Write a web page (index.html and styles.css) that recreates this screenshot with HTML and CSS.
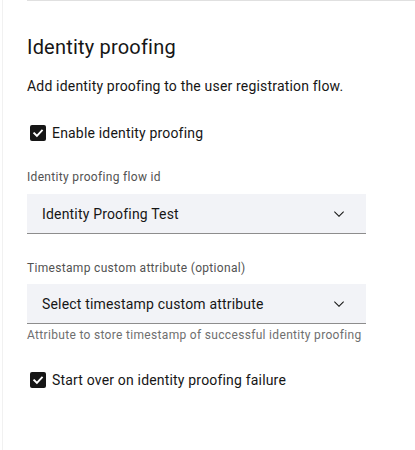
FILE: index.html
```html
<!DOCTYPE html>
<html lang="en">
<head>
<meta charset="utf-8">
<title>Identity proofing</title>
<link rel="stylesheet" href="styles.css">
</head>
<body>
<div class="panel">
  <div class="rule"></div>
  <section class="section">
    <h2 class="heading">Identity proofing</h2>
    <p class="desc">Add identity proofing to the user registration flow.</p>

    <label class="checkbox checkbox--first">
      <span class="checkbox__box">
        <svg viewBox="0 0 16 16" width="16" height="16" aria-hidden="true"><path d="M4.2 8.3 L6.9 10.9 L11.9 5.6" fill="none" stroke="#ffffff" stroke-width="1.9" stroke-linecap="square"/></svg>
      </span>
      <span class="checkbox__text">Enable identity proofing</span>
    </label>

    <div class="field field--first">
      <div class="field__label">Identity proofing flow id</div>
      <div class="dropdown">
        <span class="dropdown__text">Identity Proofing Test</span>
        <svg class="dropdown__chevron" viewBox="0 0 16 16" width="16" height="16" aria-hidden="true"><path d="M8 11L3 6 3.7 5.3 8 9.6 12.3 5.3 13 6z" fill="#161616"/></svg>
      </div>
    </div>

    <div class="field field--second">
      <div class="field__label">Timestamp custom attribute (optional)</div>
      <div class="dropdown">
        <span class="dropdown__text">Select timestamp custom attribute</span>
        <svg class="dropdown__chevron" viewBox="0 0 16 16" width="16" height="16" aria-hidden="true"><path d="M8 11L3 6 3.7 5.3 8 9.6 12.3 5.3 13 6z" fill="#161616"/></svg>
      </div>
      <div class="field__helper">Attribute to store timestamp of successful identity proofing</div>
    </div>

    <label class="checkbox checkbox--second">
      <span class="checkbox__box">
        <svg viewBox="0 0 16 16" width="16" height="16" aria-hidden="true"><path d="M4.2 8.3 L6.9 10.9 L11.9 5.6" fill="none" stroke="#ffffff" stroke-width="1.9" stroke-linecap="square"/></svg>
      </span>
      <span class="checkbox__text">Start over on identity proofing failure</span>
    </label>
  </section>
</div>
</body>
</html>
```
FILE: styles.css
```css
html, body {
  margin: 0;
  padding: 0;
  background: #ffffff;
}

body {
  font-family: Roboto, "Liberation Sans", sans-serif;
  color: #161616;
}

.panel {
  margin-left: 2px;
  border-left: 1px solid #f1f1f1;
  min-height: 450px;
  padding-left: 24px;
  box-sizing: border-box;
}

.rule {
  border-top: 1px solid #e0e0e0;
}

.section {
  width: 339px;
  padding-top: 32px;
}

.heading {
  margin: 0 0 16px;
  font-size: 20px;
  line-height: 28px;
  font-weight: 400;
  letter-spacing: 0.2px;
  color: #161616;
}

.desc {
  margin: 0;
  font-size: 14px;
  line-height: 18px;
  letter-spacing: 0.18px;
  color: #161616;
}

.checkbox {
  display: flex;
  align-items: center;
  gap: 6px;
  height: 18px;
}

.checkbox--first {
  margin-top: 29px;
}

.checkbox--second {
  margin-top: 28px;
}

.checkbox__box {
  display: flex;
  align-items: center;
  justify-content: center;
  width: 16px;
  height: 16px;
  margin-left: 3px;
  background: #161616;
  border-radius: 2px;
}

.checkbox__box svg {
  display: block;
}

.checkbox__text {
  font-size: 14px;
  line-height: 18px;
  letter-spacing: 0.18px;
  color: #161616;
}

.field--first {
  margin-top: 27px;
}

.field--second {
  margin-top: 26px;
}

.field__label {
  font-size: 12px;
  line-height: 16px;
  letter-spacing: 0.32px;
  color: #525252;
  margin-bottom: 8px;
}

.field--first .field__label {
  margin-bottom: 9px;
}

.dropdown {
  display: flex;
  align-items: center;
  justify-content: space-between;
  height: 39px;
  padding: 0 19px 0 15px;
  background: #f2f3f7;
  border-bottom: 1px solid #8d8d8d;
}

.dropdown__text {
  font-size: 14px;
  line-height: 18px;
  letter-spacing: 0.18px;
  color: #161616;
}

.dropdown__chevron {
  display: block;
  flex-shrink: 0;
}

.field__helper {
  margin-top: 3px;
  font-size: 12px;
  line-height: 16px;
  letter-spacing: 0.32px;
  color: #6f6f6f;
  white-space: nowrap;
}
```
